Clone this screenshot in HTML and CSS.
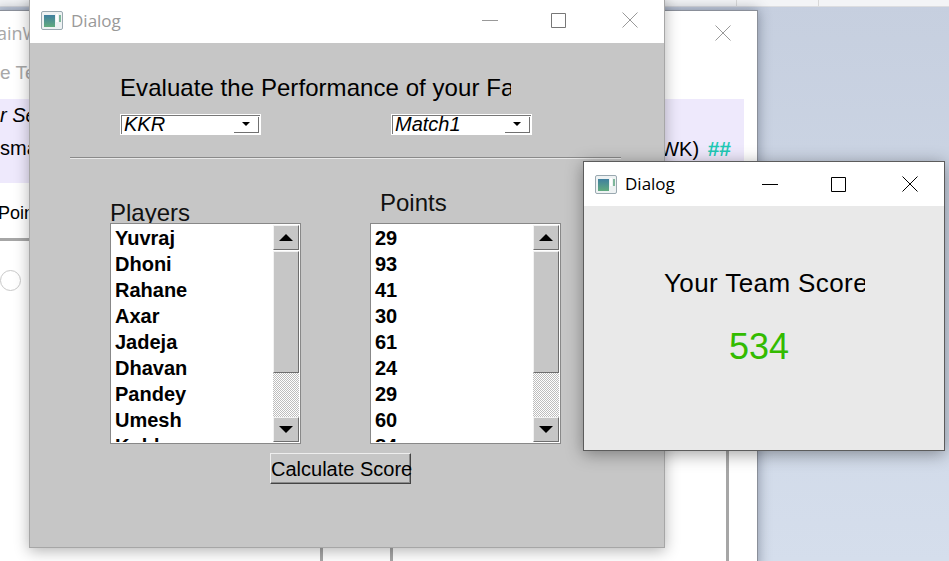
FILE: index.html
```html
<!DOCTYPE html>
<html lang="en">
<head>
	<meta charset="UTF-8">
	<title>Dialog</title>
	<link rel="stylesheet" href="styles.css">
</head>
<body>
	<!-- desktop strip at the top -->
	<div class="topstrip">
		<span class="tab tab-a"></span>
		<span class="tab"></span>
	</div>

	<!-- main window behind the dialogs -->
	<div class="win win-back">
		<div class="back-title">
			<span class="back-name">ainW</span>
			<svg class="close-back" width="16" height="16" viewBox="0 0 16 16"><path d="M.5 .5L15.5 15.5M15.5 .5L.5 15.5" stroke="#999" fill="none"/></svg>
		</div>
		<div class="back-sub">e Te</div>
		<div class="panel">
			<div class="panel-top"><i>r Se</i></div>
			<div class="panel-row">
				<span>sma</span>
				<span class="panel-end">WK) <b class="hash">##</b></span>
			</div>
		</div>
		<div class="back-head">Poin</div>
		<div class="points-table">
			<div class="cell cell-a"><span class="radio"></span></div>
			<div class="cell cell-b"></div>
			<div class="cell cell-c"></div>
		</div>
	</div>

	<!-- evaluate dialog -->
	<div class="win win-eval">
		<div class="titlebar titlebar-off">
			<svg class="appicon" width="22" height="19" viewBox="0 0 22 19">
				<defs>
					<linearGradient id="icon-fill" x1="0" y1="0" x2="0" y2="1">
						<stop offset="0" stop-color="#3f7f9f"/>
						<stop offset="1" stop-color="#62ab7e"/>
					</linearGradient>
				</defs>
				<rect x=".5" y=".5" width="21" height="18" rx="1.5" fill="#eef2f3" stroke="#9aa8b0"/>
				<rect x="3" y="4" width="11" height="12" fill="url(#icon-fill)"/>
				<rect x="15" y="3" width="2" height="8" fill="#fff"/>
				<rect x="18" y="4" width="2" height="7" fill="#7fb89c"/>
			</svg>
			<span class="wintitle">Dialog</span>
			<span class="winbtns">
				<svg width="16" height="16" viewBox="0 0 16 16"><path d="M0 8.5H16" stroke="#999" fill="none"/></svg>
				<svg class="btn-max" width="16" height="16" viewBox="0 0 16 16"><path d="M1.5 1.5H15.5V15.5H1.5Z" stroke="#777" fill="none"/></svg>
				<svg width="16" height="16" viewBox="0 0 16 16"><path d="M.5 .5L15.5 15.5M15.5 .5L.5 15.5" stroke="#999" fill="none"/></svg>
			</span>
		</div>
		<div class="eval-body">
			<div class="eval-head">Evaluate the Performance of your Fantasy Team</div>
			<div class="combos">
				<div class="combo"><i>KKR</i><span class="combo-btn"><span class="arrow-down small"></span></span></div>
				<div class="combo"><i>Match1</i><span class="combo-btn"><span class="arrow-down small"></span></span></div>
			</div>
			<div class="sep"></div>
			<div class="lists">
				<div class="listcol">
					<div class="listlabel label-players">Players</div>
					<div class="listbox">
						<ul class="items">
							<li>Yuvraj</li>
							<li>Dhoni</li>
							<li>Rahane</li>
							<li>Axar</li>
							<li>Jadeja</li>
							<li>Dhavan</li>
							<li>Pandey</li>
							<li>Umesh</li>
							<li>Kuldeep</li>
						</ul>
						<div class="scroll">
							<span class="sbtn"><span class="arrow-up"></span></span>
							<span class="thumb"></span>
							<span class="trough"></span>
							<span class="sbtn"><span class="arrow-down"></span></span>
						</div>
					</div>
				</div>
				<div class="listcol">
					<div class="listlabel label-points">Points</div>
					<div class="listbox">
						<ul class="items">
							<li>29</li>
							<li>93</li>
							<li>41</li>
							<li>30</li>
							<li>61</li>
							<li>24</li>
							<li>29</li>
							<li>60</li>
							<li>84</li>
						</ul>
						<div class="scroll">
							<span class="sbtn"><span class="arrow-up"></span></span>
							<span class="thumb"></span>
							<span class="trough"></span>
							<span class="sbtn"><span class="arrow-down"></span></span>
						</div>
					</div>
				</div>
			</div>
			<button class="calc" type="button">Calculate Score</button>
		</div>
	</div>

	<!-- score dialog -->
	<div class="win win-score">
		<div class="titlebar">
			<svg class="appicon" width="22" height="19" viewBox="0 0 22 19">
				<rect x=".5" y=".5" width="21" height="18" rx="1.5" fill="#eef2f3" stroke="#9aa8b0"/>
				<rect x="3" y="4" width="11" height="12" fill="url(#icon-fill)"/>
				<rect x="15" y="3" width="2" height="8" fill="#fff"/>
				<rect x="18" y="4" width="2" height="7" fill="#7fb89c"/>
			</svg>
			<span class="wintitle">Dialog</span>
			<span class="winbtns">
				<svg width="16" height="16" viewBox="0 0 16 16"><path d="M0 8.5H16" stroke="#000" fill="none"/></svg>
				<svg class="btn-max" width="16" height="16" viewBox="0 0 16 16"><path d="M1.5 1.5H15.5V15.5H1.5Z" stroke="#000" fill="none"/></svg>
				<svg width="16" height="16" viewBox="0 0 16 16"><path d="M.5 .5L15.5 15.5M15.5 .5L.5 15.5" stroke="#000" fill="none"/></svg>
			</span>
		</div>
		<div class="score-body">
			<div class="score-head">Your Team Score</div>
			<div class="score-num">534</div>
		</div>
	</div>
</body>
</html>
```

FILE: styles.css
```css
html, body {
	height: 100%;
}
body {
	position: relative;
	margin: 0;
	overflow: hidden;
	font-family: "Liberation Sans", Arial, sans-serif;
	color: #000;
	background: linear-gradient(#c6cfdf, #d5deec);
}
.topstrip {
	display: flex;
	justify-content: flex-end;
	height: 6px;
	background: #f3f4f6;
	border-bottom: 1px solid #dcdde0;
}
.tab {
	width: 130px;
	border-left: 1px solid #d8d8d8;
}
.tab-a {
	width: 81px;
}

/* windows on the desktop */
.win {
	position: absolute;
	box-sizing: border-box;
}
.win-back {
	left: -2px;
	top: 10px;
	width: 760px;
	height: 560px;
	background: #fff;
	border: 1px solid #8a8f99;
	border-left: none;
	box-shadow: 0 0 12px rgba(40, 50, 70, .45);
}
.win-eval {
	left: 29px;
	top: -4px;
	width: 636px;
	height: 552px;
	background: #c6c6c6;
	border: 1px solid #a6a6a6;
	box-shadow: 0 3px 14px rgba(0, 0, 0, .3);
}
.win-score {
	left: 583px;
	top: 161px;
	width: 362px;
	height: 290px;
	background: #e9e9e9;
	border: 1px solid #5c5c5c;
	box-shadow: 0 3px 16px rgba(0, 0, 0, .38);
}

/* back window pieces */
.back-title {
	display: flex;
	align-items: center;
	justify-content: space-between;
	height: 45px;
	padding: 0 26px 2px 0;
	box-sizing: border-box;
	font-family: "Open Sans", sans-serif;
	font-size: 18px;
	color: #a8a8a8;
}
.back-name {
	margin-left: -1px;
}
.back-sub {
	height: 43px;
	box-sizing: border-box;
	padding: 2px 0 0 2px;
	font-size: 19px;
	line-height: 30px;
	color: #a8a8a8;
}
.panel {
	width: 746px;
	height: 84px;
	background: #eee9fc;
	font-size: 20px;
}
.panel-top {
	height: 33px;
	padding-left: 2px;
	line-height: 33px;
}
.panel-row {
	display: flex;
	justify-content: space-between;
	height: 33px;
	padding: 0 13px 0 2px;
	line-height: 33px;
}
.hash {
	font-size: 21px;
	font-weight: bold;
	color: #1fc9b5;
}
.panel-end {
	word-spacing: 3px;
}
.back-head {
	height: 58px;
	box-sizing: border-box;
	padding: 17px 0 0;
	font-size: 18px;
	line-height: 26px;
	border-bottom: 3px solid #a6a6a6;
}
.points-table {
	display: flex;
	height: 320px;
}
.cell {
	box-sizing: border-box;
	border-right: 3px solid #a6a6a6;
}
.cell-a {
	width: 325px;
	padding: 29px 0 0 3px;
}
.cell-b {
	width: 70px;
}
.cell-c {
	width: 336px;
}
.radio {
	display: block;
	width: 19px;
	height: 19px;
	margin-left: -1px;
	border: 1px solid #c8c8c8;
	border-radius: 50%;
}

/* title bars */
.titlebar {
	display: flex;
	align-items: center;
	box-sizing: border-box;
	height: 44px;
	padding: 0 26px 0 11px;
	background: #fff;
}
.titlebar-off {
	height: 46px;
	padding: 0 26px 0 11px;
	color: #999;
}
.titlebar-off .wintitle {
	margin-top: 2px;
}
.appicon {
	flex: none;
	margin-right: 8px;
}
.wintitle {
	font-family: "Open Sans", sans-serif;
	font-size: 17px;
	line-height: 22px;
	margin-top: -1px;
}
.winbtns {
	display: flex;
	gap: 54px;
	margin-left: auto;
}
.btn-max {
	margin: 0 2px 0 -2px;
}

/* evaluate dialog */
.eval-body {
	padding: 29px 0 0 90px;
}
.eval-head {
	width: 391px;
	height: 32px;
	overflow: hidden;
	white-space: nowrap;
	font-size: 24px;
	line-height: 32px;
	letter-spacing: .06px;
}
.combos {
	display: flex;
	gap: 130px;
	margin-top: 10px;
}
.combo {
	display: flex;
	align-items: center;
	justify-content: space-between;
	box-sizing: border-box;
	width: 141px;
	height: 21px;
	padding-left: 3px;
	background: #fff;
	border: 1px solid #fff;
	box-shadow: inset 1px 1px 0 #777;
	font-size: 20px;
	line-height: 19px;
}
.combo-btn {
	display: flex;
	align-items: center;
	justify-content: center;
	box-sizing: border-box;
	width: 25px;
	height: 16px;
	margin-right: 1px;
	border-right: 1px solid #707070;
	border-bottom: 1px solid #707070;
}
.sep {
	width: 551px;
	height: 1px;
	margin: 22px 0 0 -50px;
	background: #8a8a8a;
	border-bottom: 1px solid #e8e8e8;
}
.lists {
	display: flex;
	gap: 69px;
	margin: 32px 0 0 -10px;
}
.listcol {
	width: 191px;
}
.listlabel {
	height: 32px;
	font-size: 24px;
	line-height: 32px;
	color: #111;
}
.label-players {
	line-height: 44px;
	overflow: hidden;
}
.label-points {
	margin: -4px 0 4px 10px;
}
.listbox {
	display: flex;
	box-sizing: border-box;
	height: 221px;
	background: #fff;
	border: 1px solid #888;
	overflow: hidden;
}
.items {
	flex: 1;
	height: 218px;
	margin: 0;
	padding: 1px 0 0 4px;
	box-sizing: border-box;
	overflow: hidden;
	list-style: none;
	font-size: 20px;
	font-weight: bold;
	line-height: 26px;
}
.scroll {
	display: flex;
	flex-direction: column;
	width: 27px;
	padding: 1px 1px 1px 0;
	box-sizing: border-box;
	height: 219px;
}
.sbtn, .thumb {
	display: flex;
	align-items: center;
	justify-content: center;
	box-sizing: border-box;
	background: #c6c6c6;
	border: 1px solid #6e6e6e;
	border-top-color: #f2f2f2;
	border-left-color: #f2f2f2;
}
.sbtn {
	flex: none;
	height: 25px;
}
.thumb {
	flex: none;
	height: 122px;
	margin-top: 1px;
}
.trough {
	flex: 1;
	background: conic-gradient(#fff 25%, #bdbdbd 0 50%, #fff 0 75%, #bdbdbd 0) 0 0 / 2px 2px;
}
.arrow-up, .arrow-down {
	width: 0;
	height: 0;
	border-left: 7px solid transparent;
	border-right: 7px solid transparent;
}
.arrow-up {
	border-bottom: 7px solid #000;
}
.arrow-down {
	border-top: 7px solid #000;
}
.arrow-down.small {
	border-left-width: 4px;
	border-right-width: 4px;
	border-top-width: 4px;
}
.calc {
	display: block;
	box-sizing: border-box;
	width: 141px;
	height: 31px;
	margin: 9px 0 0 150px;
	padding: 1px 0 0;
	background: #c6c6c6;
	border: 1px solid #444;
	border-top-color: #eee;
	border-left-color: #eee;
	box-shadow: inset -1px -1px 0 #8a8a8a;
	font-family: inherit;
	font-size: 20px;
	color: #000;
	white-space: nowrap;
}

/* score dialog */
.score-body {
	padding: 60px 0 0 80px;
}
.score-head {
	width: 201px;
	overflow: hidden;
	white-space: nowrap;
	font-size: 26px;
	line-height: 34px;
	letter-spacing: .4px;
}
.score-num {
	margin: 26px 0 0 65px;
	font-size: 36px;
	line-height: 42px;
	color: #33bb00;
}
```
